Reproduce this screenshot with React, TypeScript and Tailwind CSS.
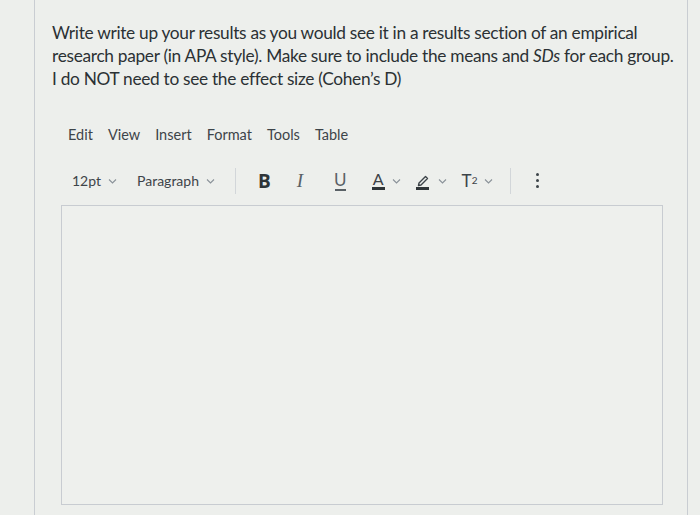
import React from "react";

const Chev = () => (
  <svg width="11" height="10" viewBox="0 0 11 10" className="ml-[6px] mt-[1px]">
    <path d="M2 3.5 L5.5 7 L9 3.5" fill="none" stroke="#8a9299" strokeWidth="1.1" />
  </svg>
);

export default function App() {
  return (
    <div
      className="w-[700px] h-[515px] overflow-hidden bg-[#edefec] text-[#2b3134]"
      style={{ fontFamily: "Lato, 'Open Sans', sans-serif" }}
    >
      <div className="ml-[34px] mr-[12px] h-full border-l border-r border-[#c9cdd2] pl-[17px] pr-[10px] pt-[21px]">
        <div className="text-[17.3px] leading-[23px] tracking-[-0.3px] whitespace-nowrap">
          <p>Write write up your results as you would see it in a results section of an empirical</p>
          <p>
            research paper (in APA style). Make sure to include the means and <i>SDs</i> for each group.
          </p>
          <p>I do NOT need to see the effect size (Cohen’s D)</p>
        </div>

        <div className="mt-[34px] flex items-center gap-[15px] pl-[16px] text-[14.5px] text-[#3d4449]">
          <span>Edit</span>
          <span>View</span>
          <span>Insert</span>
          <span>Format</span>
          <span>Tools</span>
          <span>Table</span>
        </div>

        <div className="mt-[20px] flex items-center h-[30px] pl-[20px] text-[14px] text-[#3d4449]">
          <span className="flex items-center">12pt<Chev /></span>
          <span className="flex items-center ml-[19px]">Paragraph<Chev /></span>
          <span className="ml-[19px] h-[26px] w-px bg-[#d2d6d9]" />
          <span className="ml-[22px] text-[19px] font-bold text-[#2f3538]" style={{ fontFamily: "'Open Sans', sans-serif" }}>B</span>
          <span className="ml-[26px] text-[19px] text-[#5a6166]" style={{ fontFamily: "'Liberation Serif', serif", fontStyle: "italic" }}>I</span>
          <span className="ml-[31px] flex flex-col items-center">
            <span className="text-[17px] leading-[18px] text-[#5a6166]">U</span>
            <span className="h-[1.5px] w-[11px] bg-[#5a6166]" />
          </span>
          <span className="ml-[25px] flex items-center">
            <span className="flex flex-col items-center">
              <span className="text-[16px] leading-[16px] text-[#3d4449]">A</span>
              <span className="h-[3px] w-[13px] bg-[#2f3538]" />
            </span>
            <Chev />
          </span>
          <span className="ml-[13px] flex items-center">
            <svg width="16" height="18" viewBox="0 0 16 18">
              <path d="M4 11 L10.5 4.5 L12.5 6.5 L6 13 L3.5 13.5 Z" fill="none" stroke="#3d4449" strokeWidth="1.4" strokeLinejoin="round" />
              <rect x="1" y="15" width="13" height="3" fill="#2f3538" />
            </svg>
            <Chev />
          </span>
          <span className="ml-[14px] flex items-center">
            <span className="text-[17px] text-[#3d4449]">T<sup className="text-[10px] relative -top-[3px]">2</sup></span>
            <Chev />
          </span>
          <span className="ml-[16px] h-[26px] w-px bg-[#d2d6d9]" />
          <span className="ml-[25px] flex flex-col gap-[3px]">
            <span className="w-[3px] h-[3px] rounded-full bg-[#3d4449]" />
            <span className="w-[3px] h-[3px] rounded-full bg-[#3d4449]" />
            <span className="w-[3px] h-[3px] rounded-full bg-[#3d4449]" />
          </span>
        </div>

        <div className="mt-[9px] ml-[9px] mr-[14px] h-[300px] border border-[#c8ccd1] bg-[#eef0ed]" />
      </div>
    </div>
  );
}
